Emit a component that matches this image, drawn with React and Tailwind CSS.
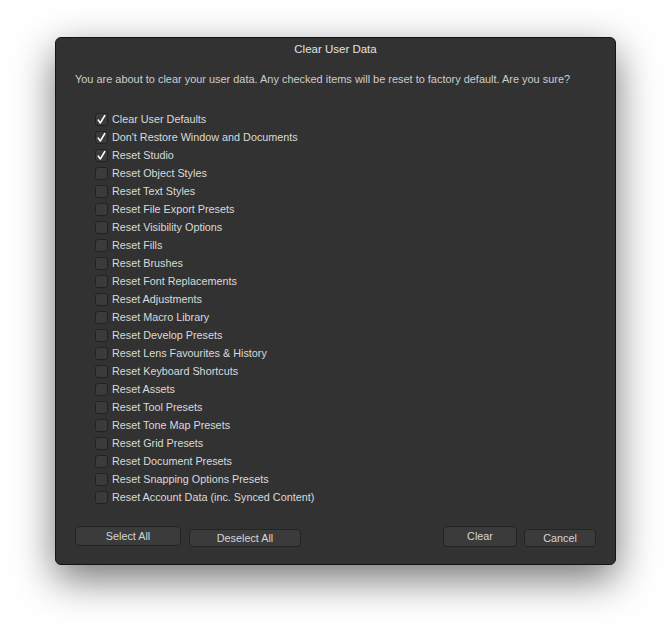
import React from "react";

const items = [
  ["Clear User Defaults", true],
  ["Don't Restore Window and Documents", true],
  ["Reset Studio", true],
  ["Reset Object Styles", false],
  ["Reset Text Styles", false],
  ["Reset File Export Presets", false],
  ["Reset Visibility Options", false],
  ["Reset Fills", false],
  ["Reset Brushes", false],
  ["Reset Font Replacements", false],
  ["Reset Adjustments", false],
  ["Reset Macro Library", false],
  ["Reset Develop Presets", false],
  ["Reset Lens Favourites & History", false],
  ["Reset Keyboard Shortcuts", false],
  ["Reset Assets", false],
  ["Reset Tool Presets", false],
  ["Reset Tone Map Presets", false],
  ["Reset Grid Presets", false],
  ["Reset Document Presets", false],
  ["Reset Snapping Options Presets", false],
  ["Reset Account Data (inc. Synced Content)", false],
];

function Check({ on }) {
  return (
    <div className="w-[13px] h-[13px] rounded-[3px] bg-[#3b3b3b] border border-[#222222] flex items-center justify-center shrink-0">
      {on && (
        <svg width="11" height="11" viewBox="0 0 11 11">
          <polyline points="2.2,6 4.3,9 8.8,1.5" fill="none" stroke="#ffffff" strokeWidth="1.5" strokeLinecap="round" strokeLinejoin="round" />
        </svg>
      )}
    </div>
  );
}

function Btn({ children, cls }) {
  return (
    <div className={"flex items-center justify-center rounded-[4px] bg-[#3b3b3b] border border-[#232323] text-[10.8px] text-[#d6d6d6] " + cls}>
      {children}
    </div>
  );
}

export default function App() {
  return (
    <div className="w-[672px] h-[638px] bg-white pt-[37px] pl-[55px]" style={{ fontFamily: '"Liberation Sans", Arial, sans-serif' }}>
      <div className="w-[561px] h-[528px] bg-[#323232] rounded-[6px] border border-[#151515] shadow-[0_14px_40px_rgba(0,0,0,0.55)] flex flex-col">
        <div className="mt-[1px] h-[22px] flex items-center justify-center text-[11.5px] text-[#e2e2e2]">Clear User Data</div>
        <div className="mt-[9px] h-[18px] flex items-center pl-[19px] text-[10.95px] text-[#cdcdcd]">
          You are about to clear your user data. Any checked items will be reset to factory default. Are you sure?
        </div>
        <div className="mt-[22px] pl-[39px] flex flex-col">
          {items.map(([label, on]) => (
            <div key={label} className="h-[18px] flex items-center gap-[4px]">
              <Check on={on} />
              <span className="text-[10.8px] text-[#dadada]">{label}</span>
            </div>
          ))}
        </div>
        <div className="mt-[20px] h-[21px] px-[19px] flex items-end justify-between">
          <div className="flex items-end gap-[8px]">
            <Btn cls="w-[106px] h-[20px] mb-[1px]">Select All</Btn>
            <Btn cls="w-[112px] h-[18px]">Deselect All</Btn>
          </div>
          <div className="flex items-end gap-[7px]">
            <Btn cls="w-[74px] h-[21px]">Clear</Btn>
            <Btn cls="w-[72px] h-[18px]">Cancel</Btn>
          </div>
        </div>
      </div>
    </div>
  );
}
